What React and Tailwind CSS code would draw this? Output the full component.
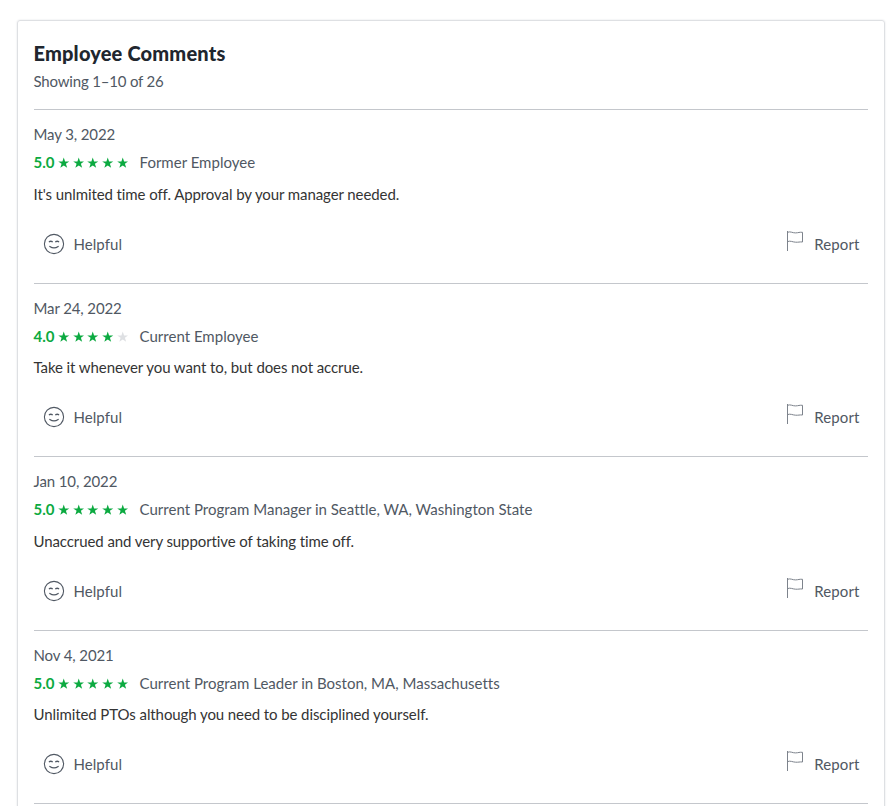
const comments = [
  {
    date: 'May 3, 2022',
    rating: 5,
    author: 'Former Employee',
    text: "It's unlmited time off. Approval by your manager needed.",
  },
  {
    date: 'Mar 24, 2022',
    rating: 4,
    author: 'Current Employee',
    text: 'Take it whenever you want to, but does not accrue.',
  },
  {
    date: 'Jan 10, 2022',
    rating: 5,
    author: 'Current Program Manager in Seattle, WA, Washington State',
    text: 'Unaccrued and very supportive of taking time off.',
  },
  {
    date: 'Nov 4, 2021',
    rating: 5,
    author: 'Current Program Leader in Boston, MA, Massachusetts',
    text: 'Unlimited PTOs although you need to be disciplined yourself.',
  },
]

function Star({ filled }) {
  return (
    <svg viewBox="0 0 24 24" className={`size-[11.5px] ${filled ? 'text-[#0caa41]' : 'text-[#dee0e3]'}`}>
      <path
        fill="currentColor"
        d="M12 1l2.8 8.2h8.7l-7 5.1 2.6 8.2-7.1-5-7.1 5 2.6-8.2-7-5.1h8.7z"
      />
    </svg>
  )
}

function SmileIcon() {
  return (
    <svg viewBox="0 0 22 22" className="size-[22px]" fill="none" stroke="currentColor" strokeLinecap="round">
      <circle cx="11" cy="11" r="9.6" strokeWidth="1.1" />
      <path strokeWidth="1.4" d="M6.4 8.7q1.4-.8 2.8 0M12.8 8.7q1.4-.8 2.8 0" />
      <path strokeWidth="1.2" d="M6.8 13.4q4.2 2.8 8.4 0" />
    </svg>
  )
}

function FlagIcon() {
  return (
    <svg viewBox="0 0 18 22" className="h-[22px] w-[18px] text-[#7d838c]" fill="none" stroke="currentColor">
      <path d="M1.5 1v20M1.5 2.3c3-1.2 5 .7 8 .6s4-.9 7-.6v9.7c-3-.3-4 .4-7 .2s-5-1.7-8-.6" />
    </svg>
  )
}

function Comment({ date, rating, author, text }) {
  return (
    <li className="h-[173.5px] border-t border-[#c4c7cc] pt-[14px] leading-5 text-[#505863]">
      <div className="tracking-[-0.12px]">{date}</div>
      <div className="mt-2 flex items-center">
        <span className="w-[24.5px] font-bold text-[#0caa41]">{rating}.0</span>
        <span className="mt-[2px] mr-[11.3px] flex gap-[3.2px]">
          {[1, 2, 3, 4, 5].map((n) => (
            <Star key={n} filled={n <= rating} />
          ))}
        </span>
        <span className="tracking-[0.01px]">{author}</span>
      </div>
      <p className="mt-[11.8px] tracking-[-0.09px] text-[#343434]">{text}</p>
      <div className="mt-[29px] flex items-center justify-between pr-[8.5px] pl-[9px]">
        <button className="flex items-center gap-[9px] tracking-[0.05px]">
          <SmileIcon />
          Helpful
        </button>
        <button className="flex items-center gap-[10.5px] tracking-[0.12px]">
          <span className="-mt-[6px]">
            <FlagIcon />
          </span>
          Report
        </button>
      </div>
    </li>
  )
}

export default function App() {
  return (
    <div className="h-[806px] overflow-hidden bg-white pt-5 pr-[9px] pl-[17px] font-['Lato',sans-serif] text-[15px]">
      <section className="h-[850px] rounded-[3px] border border-[#dee0e3] pt-5 pr-4 pl-[15.5px] shadow-[0_0_2px_#dee0e3]">
        <h2 className="text-[20px] leading-6 font-black tracking-[0.18px] text-[#20262e]">Employee Comments</h2>
        <p className="mt-[6px] leading-5 tracking-[-0.18px] text-[#505863]">Showing 1–10 of 26</p>
        <ul className="mt-[18px] border-b border-[#c4c7cc]">
          {comments.map((comment) => (
            <Comment key={comment.date} {...comment} />
          ))}
        </ul>
      </section>
    </div>
  )
}
